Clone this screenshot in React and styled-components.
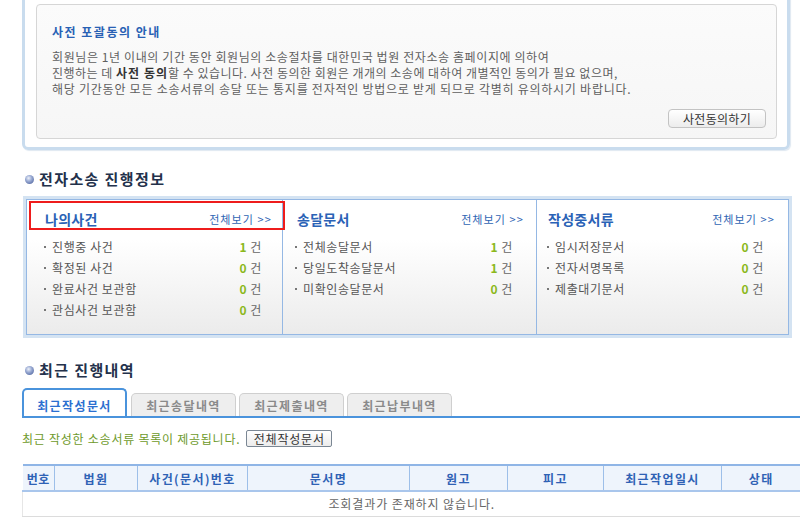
import React from 'react';
import styled, { createGlobalStyle } from 'styled-components';

const GlobalStyle = createGlobalStyle`
	body {
		margin: 0;
		background: #fff;
		font-family: 'Noto Sans CJK KR', 'Liberation Sans', sans-serif;
		font-size: 12px;
		color: #555;
		letter-spacing: 0.6px;
		overflow: hidden;
	}
	* {
		box-sizing: border-box;
	}
`;

const columns = [
	{
		title: '나의사건',
		highlight: true,
		headPl: 14,
		headPr: 11,
		pl: 17,
		pr: 20,
		items: [
			['진행중 사건', 1],
			['확정된 사건', 0],
			['완료사건 보관함', 0],
			['관심사건 보관함', 0],
		],
	},
	{
		title: '송달문서',
		headPl: 10,
		headPr: 10,
		pl: 12,
		pr: 23,
		items: [
			['전체송달문서', 1],
			['당일도착송달문서', 1],
			['미확인송달문서', 0],
		],
	},
	{
		title: '작성중서류',
		headPl: 7,
		headPr: 11,
		pl: 10,
		pr: 24,
		items: [
			['임시저장문서', 0],
			['전자서명목록', 0],
			['제출대기문서', 0],
		],
	},
];

const tabs = ['최근작성문서', '최근송달내역', '최근제출내역', '최근납부내역'];

const tableCols = [
	['번호', 32],
	['법원', 83],
	['사건(문서)번호', 110],
	['문서명', 162],
	['원고', 98],
	['피고', 96],
	['최근작업일시', 118],
	['상태', 79],
];

const App = () => {
	return (
		<StyledPage>
			<GlobalStyle />
			<StyledNoticeOuter>
				<StyledNotice>
					<h4>사전 포괄동의 안내</h4>
					<p>
						회원님은 1년 이내의 기간 동안 회원님의 소송절차를 대한민국 법원 전자소송 홈페이지에 의하여
						<br />
						<span className="tight">
							진행하는 데 <b>사전 동의</b>할 수 있습니다. 사전 동의한 회원은 개개의 소송에 대하여 개별적인 동의가 필요 없으며,
						</span>
						<br />
						<span className="loose">
							해당 기간동안 모든 소송서류의 송달 또는 통지를 전자적인 방법으로 받게 되므로 각별히 유의하시기 바랍니다.
						</span>
					</p>
					<div className="actions">
						<StyledButton wide>사전동의하기</StyledButton>
					</div>
				</StyledNotice>
			</StyledNoticeOuter>

			<StyledSectionTitle>전자소송 진행정보</StyledSectionTitle>
			<StyledPanel>
				{columns.map((col) => (
					<StyledColumn key={col.title}>
						<StyledColumnHead
							highlight={col.highlight}
							pl={col.headPl}
							pr={col.headPr}
						>
							<h5>{col.title}</h5>
							<a>전체보기 &gt;&gt;</a>
						</StyledColumnHead>
						<StyledList pl={col.pl} pr={col.pr}>
							{col.items.map(([label, count]) => (
								<li key={label}>
									<span className="label">{label}</span>
									<span className="count">
										<b>{count}</b> 건
									</span>
								</li>
							))}
						</StyledList>
					</StyledColumn>
				))}
			</StyledPanel>

			<StyledSectionTitle second>최근 진행내역</StyledSectionTitle>
			<StyledTabs>
				{tabs.map((tab, i) => (
					<StyledTab key={tab} active={i === 0}>
						{tab}
					</StyledTab>
				))}
			</StyledTabs>
			<StyledMessage>
				<span>최근 작성한 소송서류 목록이 제공됩니다.</span>
				<StyledButton>전체작성문서</StyledButton>
			</StyledMessage>

			<StyledTable>
				<colgroup>
					{tableCols.map(([name, w]) => (
						<col key={name} style={{ width: w }} />
					))}
				</colgroup>
				<thead>
					<tr>
						{tableCols.map(([name]) => (
							<th key={name}>{name}</th>
						))}
					</tr>
				</thead>
				<tbody>
					<tr>
						<td colSpan={tableCols.length}>조회결과가 존재하지 않습니다.</td>
					</tr>
				</tbody>
			</StyledTable>
		</StyledPage>
	);
};

const StyledPage = styled.div`
	width: 800px;
	padding-left: 22px;
`;

const StyledNoticeOuter = styled.div`
	margin: -10px 10px 0 0;
	border: 3px solid #c9dcee;
	border-radius: 6px;
	padding: 11px 10px 8px 11px;
	box-shadow: 1px 1px 1px #dfe8f1;
`;

const StyledNotice = styled.div`
	border: 1px solid #d6d6d6;
	border-radius: 4px;
	background: linear-gradient(#fbfbfb, #f6f6f6);
	padding: 19px 10px 10px 15px;
	h4 {
		margin: 0 0 9px;
		font-size: 12px;
		line-height: 16px;
		color: #2861b4;
		font-weight: bold;
		letter-spacing: 1.5px;
	}
	p {
		margin: 0;
		line-height: 16px;
		color: #5f5f5f;
	}
	.tight {
		letter-spacing: 0.5px;
	}
	.loose {
		letter-spacing: 0.75px;
	}
	b {
		color: #333;
		letter-spacing: 1px;
	}
	.actions {
		display: flex;
		justify-content: flex-end;
		margin-top: 12px;
	}
`;

const StyledButton = styled.button`
	font-family: inherit;
	font-size: 12px;
	line-height: 15px;
	letter-spacing: ${(p) => (p.wide ? '0.3px' : '0.8px')};
	color: #333;
	height: ${(p) => (p.wide ? '19px' : '17px')};
	width: ${(p) => (p.wide ? '98px' : '86px')};
	padding: 0;
	border: 1px solid ${(p) => (p.wide ? '#c3c3c3' : '#7b8794')};
	border-radius: ${(p) => (p.wide ? '4px' : '2px')};
	background: linear-gradient(#ffffff, #ececec);
	cursor: pointer;
`;

const StyledSectionTitle = styled.h3`
	display: flex;
	align-items: center;
	margin: ${(p) => (p.second ? '23px 0 9px' : '20px 0 8px')};
	padding-left: 3px;
	font-size: 15px;
	line-height: 18px;
	font-weight: bold;
	letter-spacing: 1.4px;
	color: #23314b;
	&::before {
		content: '';
		width: 9px;
		height: 9px;
		margin-right: 5px;
		border-radius: 50%;
		background: radial-gradient(circle at 40% 35%, #eef2fa 0, #98a9d2 40%, #3f5593 100%);
	}
`;

const StyledPanel = styled.div`
	display: grid;
	grid-template-columns: 256px 254px 1fr;
	width: 769px;
	margin-left: 1px;
	height: 142px;
	border: 3px solid #d4e3f2;
	background: linear-gradient(#ffffff 30%, #ebebeb);
`;

const StyledColumn = styled.div`
	border-top: 1px solid #95b8e4;
	border-bottom: 1px solid #95b8e4;
	border-left: 1px solid #95b8e4;
	&:last-child {
		border-right: 1px solid #95b8e4;
	}
`;

const StyledColumnHead = styled.div`
	display: flex;
	justify-content: space-between;
	align-items: flex-end;
	height: 29px;
	margin: 1px ${(p) => (p.highlight ? '-3px' : '0')} 0 2px;
	padding: 0 ${(p) => p.pr}px 0 ${(p) => p.pl}px;
	border: 2px solid ${(p) => (p.highlight ? '#ee1c1c' : 'transparent')};
	position: relative;
	h5 {
		margin: 0;
		font-size: 14px;
		line-height: 18px;
		font-weight: bold;
		letter-spacing: 0.3px;
		color: #2a62b6;
	}
	a {
		font-size: 11px;
		line-height: 18px;
		color: #2f65b3;
		letter-spacing: 1.1px;
	}
`;

const StyledList = styled.ul`
	list-style: none;
	margin: 6px 0 0;
	padding: 0 ${(p) => p.pr}px 0 ${(p) => p.pl}px;
	li {
		display: flex;
		justify-content: space-between;
		align-items: center;
		height: 21px;
		line-height: 21px;
		color: #555;
	}
	.label {
		display: flex;
		align-items: center;
	}
	.label::before {
		content: '';
		width: 2px;
		height: 2px;
		margin-right: 6px;
		background: #777;
	}
	.count {
		color: #666;
	}
	b {
		color: #8bb81c;
		font-weight: bold;
	}
`;

const StyledTabs = styled.div`
	display: flex;
	align-items: flex-end;
	gap: 3px;
	border-bottom: 2px solid #4a93dc;
`;

const StyledTab = styled.div`
	width: 105px;
	height: ${(p) => (p.active ? '28px' : '23px')};
	margin-right: ${(p) => (p.active ? '1px' : '0')};
	display: flex;
	align-items: center;
	justify-content: center;
	padding-top: ${(p) => (p.active ? '5px' : '0')};
	font-size: 12px;
	font-weight: bold;
	letter-spacing: 1.4px;
	color: ${(p) => (p.active ? '#2c6fd0' : '#8a8a8a')};
	background: ${(p) => (p.active ? '#fff' : '#eeeeee')};
	border: ${(p) => (p.active ? '2px solid #4a93dc' : '1px solid #cfcfcf')};
	border-bottom: none;
	border-radius: 5px 5px 0 0;
`;

const StyledMessage = styled.div`
	display: flex;
	align-items: center;
	gap: 6px;
	margin-top: 12px;
	color: #6e9a2b;
	line-height: 17px;
	letter-spacing: 0.75px;
`;

const StyledTable = styled.table`
	margin-top: 17px;
	width: 778px;
	border-collapse: collapse;
	table-layout: fixed;
	th {
		height: 26px;
		padding: 0;
		background: #eef4fc;
		border-top: 2px solid #8fb5e6;
		border-bottom: 2px solid #a9c6ec;
		border-left: 1px solid #9dbfe9;
		font-size: 12px;
		font-weight: bold;
		color: #2f62b5;
		letter-spacing: 1.4px;
		white-space: nowrap;
	}
	th:first-child {
		border-left: none;
		letter-spacing: 0.5px;
	}
	td {
		height: 25px;
		padding: 0;
		text-align: center;
		color: #666;
		letter-spacing: 0.9px;
		border-bottom: 1px solid #dcdcdc;
		border-left: 1px solid #e6e6e6;
	}
`;

export default App;
